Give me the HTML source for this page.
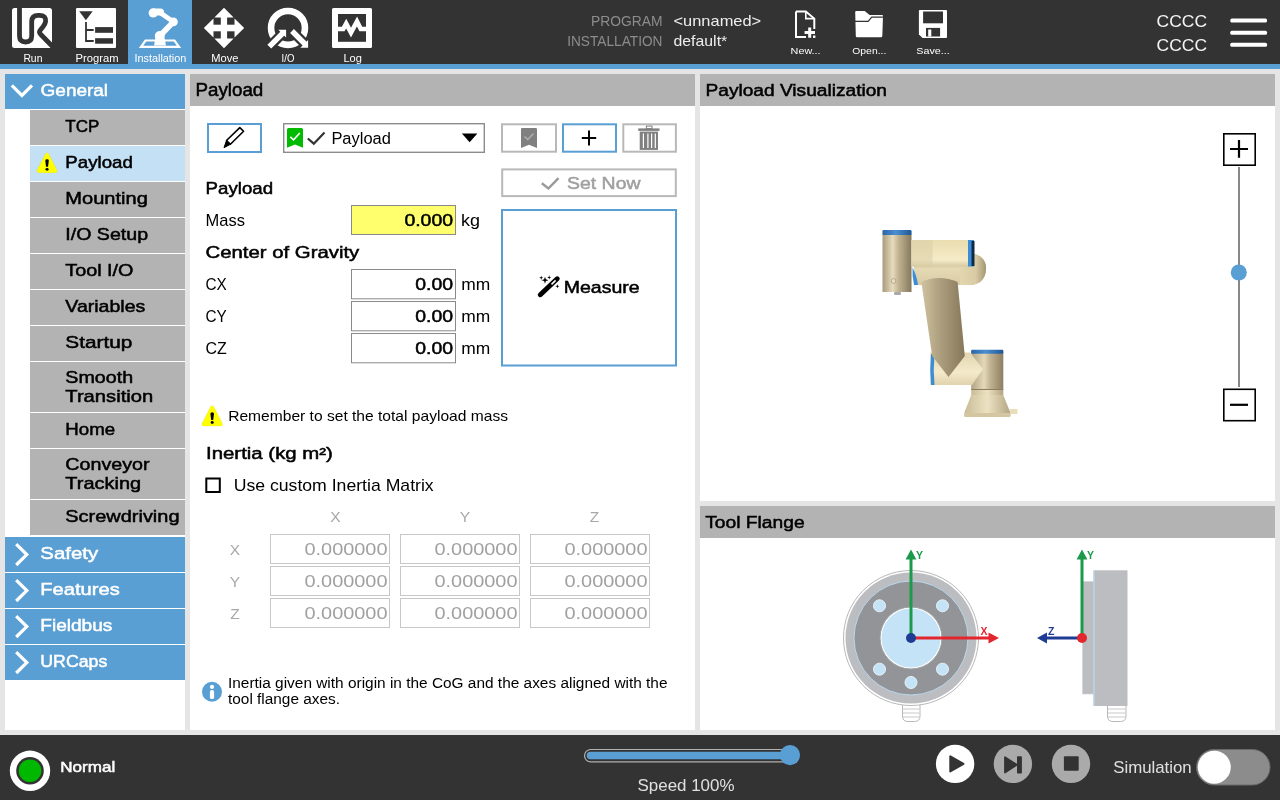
<!DOCTYPE html>
<html><head><meta charset="utf-8"><title>PolyScope - Installation - Payload</title>
<style>
html,body{margin:0;padding:0;width:1280px;height:800px;overflow:hidden;background:#e5e5e5;}
svg{display:block;font-family:"Liberation Sans", sans-serif;}
</style></head><body>
<div id="ui" style="position:absolute;left:0;top:0;width:1280px;height:800px;will-change:transform">
<svg width="1280" height="800" viewBox="0 0 1280 800">
<rect x="0" y="0" width="1280" height="800" fill="#e5e5e5"/>
<rect x="0" y="0" width="1280" height="64" fill="#333333"/>
<rect x="0" y="64" width="1280" height="5" fill="#5a9fd4"/>
<rect x="128" y="0" width="64" height="64" fill="#5a9fd4"/>
<rect x="0" y="735" width="1280" height="65" fill="#333333"/>
<rect x="5" y="74" width="180" height="656" fill="#fff"/>
<rect x="190" y="74" width="505" height="656" fill="#fff"/>
<rect x="700" y="74" width="575" height="427" fill="#fff"/>
<rect x="700" y="506" width="575" height="224" fill="#fff"/>
<rect x="190" y="74" width="505" height="32" fill="#b3b3b3"/>
<rect x="700" y="74" width="575" height="32" fill="#b3b3b3"/>
<rect x="700" y="506" width="575" height="32" fill="#b3b3b3"/>
<rect x="12" y="8" width="40" height="40" rx="2.5" fill="#ffffff"/>
<path d="M19.5 6 L19.5 36 Q19.5 42 25.6 42 Q31.7 42 31.7 36 L31.7 21.5 Q31.7 15.3 38 15.3 L39.5 15.3 Q46.3 15.3 45.6 21.5 Q45.2 24 43 26.8 L40.2 30.2 Q38.6 32.3 40.8 34.5 L54 48" fill="none" stroke="#333333" stroke-width="4.8"/>
<rect x="76" y="8" width="40" height="40" rx="1" fill="#ffffff"/>
<path d="M79.2 11.2 L92.7 11.2 L85.9 20.2 Z" fill="#333333"/>
<path d="M86 22 L86 41 L93.7 41 M86 30 L93.7 30" fill="none" stroke="#333333" stroke-width="1.8"/>
<rect x="95.1" y="27.1" width="17.9" height="5.7" fill="#333333"/>
<rect x="95.1" y="38.2" width="17.9" height="5.5" fill="#333333"/>
<path d="M145.5 40.5 L174.5 40.5 L179 46.8 L141 46.8 Z" fill="none" stroke="#ffffff" stroke-width="2.2" stroke-linejoin="miter"/>
<path d="M154 45.5 L155.5 38 L164.5 38 L166 45.5 Z" fill="#ffffff"/>
<circle cx="159.8" cy="36" r="5" fill="#ffffff"/>
<path d="M159.8 36 L173.4 21.9" fill="none" stroke="#ffffff" stroke-width="5.6"/>
<path d="M173.4 21.9 L161 13.2" fill="none" stroke="#ffffff" stroke-width="4.8"/>
<circle cx="173.4" cy="21.9" r="4.4" fill="#ffffff"/>
<path d="M153 8.5 L160.5 8.5 Q164 8.5 164 12 Q164 15.5 160.5 15.5 L153 15.5 Z" fill="#ffffff"/>
<circle cx="153.2" cy="12.9" r="4.6" fill="#ffffff"/>
<path d="M224 7.8 L233.6 17.5 L214.4 17.5 Z M224 48.2 L233.6 38.5 L214.4 38.5 Z M203.8 28 L213.5 18.4 L213.5 37.6 Z M244.2 28 L234.5 18.4 L234.5 37.6 Z" fill="#ffffff"/>
<rect x="220.8" y="17" width="6.3" height="22" fill="#ffffff"/><rect x="213" y="24.7" width="22" height="6.6" fill="#ffffff"/>
<circle cx="288" cy="27.9" r="16.95" fill="none" stroke="#ffffff" stroke-width="6.6"/>
<path d="M269.3 46.7 L283.5 32.5 M292 31 L306 45" stroke="#333333" stroke-width="10" fill="none"/>
<path d="M286.1 29.8 L286.1 37.6 L278.3 29.8 Z M308.1 47.8 L308.1 40 L300.3 47.8 Z" fill="#ffffff" stroke="#333333" stroke-width="2.2" stroke-linejoin="miter"/>
<path d="M286.1 29.8 L286.1 37.6 L278.3 29.8 Z M308.1 47.8 L308.1 40 L300.3 47.8 Z" fill="#ffffff"/>
<path d="M269.3 46.7 L283.5 32.5 M292 31 L305.5 44.5" stroke="#ffffff" stroke-width="5.4" fill="none"/>
<rect x="332" y="8" width="40" height="40" rx="1.5" fill="#ffffff"/>
<rect x="338" y="14" width="28" height="27.8" fill="#333333"/>
<path d="M337 29 L343.2 29 L346.2 23.6 L351 32.6 L357 21.5 L360.8 29 L367 29" fill="none" stroke="#ffffff" stroke-width="4.6" stroke-linejoin="miter" stroke-miterlimit="3"/>
<text x="23.4" y="62" font-size="10.4" fill="#ffffff" text-anchor="start" textLength="19" lengthAdjust="spacingAndGlyphs" >Run</text>
<text x="75.5" y="62" font-size="10.4" fill="#ffffff" text-anchor="start" textLength="43" lengthAdjust="spacingAndGlyphs" >Program</text>
<text x="134.4" y="62" font-size="10.4" fill="#ffffff" text-anchor="start" textLength="52" lengthAdjust="spacingAndGlyphs" >Installation</text>
<text x="211.2" y="62" font-size="10.4" fill="#ffffff" text-anchor="start" textLength="27.2" lengthAdjust="spacingAndGlyphs" >Move</text>
<text x="281.6" y="62" font-size="10.4" fill="#ffffff" text-anchor="start" textLength="12.8" lengthAdjust="spacingAndGlyphs" >I/O</text>
<text x="343.4" y="62" font-size="10.4" fill="#ffffff" text-anchor="start" textLength="18.5" lengthAdjust="spacingAndGlyphs" >Log</text>
<text x="662.5" y="26" font-size="14.3" fill="#8c8c8c" text-anchor="end" textLength="71.5" lengthAdjust="spacingAndGlyphs" >PROGRAM</text>
<text x="662.5" y="45.7" font-size="14.3" fill="#8c8c8c" text-anchor="end" textLength="95.3" lengthAdjust="spacingAndGlyphs" >INSTALLATION</text>
<text x="673.5" y="26" font-size="14.3" fill="#eeeeee" text-anchor="start" textLength="87.7" lengthAdjust="spacingAndGlyphs" >&lt;unnamed&gt;</text>
<text x="673.5" y="45.7" font-size="14.3" fill="#eeeeee" text-anchor="start" textLength="53.7" lengthAdjust="spacingAndGlyphs" >default*</text>
<path d="M796 11.4 L805.8 11.4 L814.3 18.6 L814.3 29" fill="none" stroke="#ffffff" stroke-width="2"/>
<path d="M796 11.4 L796 37 L806 37" fill="none" stroke="#ffffff" stroke-width="2"/>
<path d="M805.8 11.4 L805.8 18.6 L814.3 18.6" fill="none" stroke="#ffffff" stroke-width="1.6"/>
<path d="M809.7 27.5 L809.7 37.8 M804.6 32.6 L815 32.6" stroke="#ffffff" stroke-width="3" fill="none"/>
<rect x="813" y="35.5" width="2.4" height="2.4" fill="#ffffff"/>
<path d="M855.2 12 Q855.2 10.9 856.3 10.9 L864.7 10.9 L869.6 14.9 L882 14.9 Q883 14.9 883 16 L882.3 36 Q882.2 37.2 881 37.2 L857 37.2 Q855.9 37.2 855.8 36 Z" fill="#ffffff"/>
<path d="M854.5 21.4 L868.2 21.4 L871.7 17.2 L884 17.2" fill="none" stroke="#333333" stroke-width="1.2"/>
<path d="M919.9 10 L946 10 Q947 10 947 11 L947 37 Q947 37.9 946 37.9 L922.5 37.9 L918.9 34.3 L918.9 11 Q918.9 10 919.9 10 Z" fill="#ffffff"/>
<rect x="923.1" y="11.5" width="19.9" height="11.8" fill="#333333"/>
<rect x="926" y="27.9" width="14.1" height="8.6" fill="#333333"/>
<rect x="928.2" y="29.5" width="3.1" height="7" fill="#ffffff"/>
<text x="790.6" y="54.2" font-size="9.8" fill="#ffffff" text-anchor="start" textLength="30" lengthAdjust="spacingAndGlyphs" >New...</text>
<text x="852.3" y="54.2" font-size="9.8" fill="#ffffff" text-anchor="start" textLength="34" lengthAdjust="spacingAndGlyphs" >Open...</text>
<text x="916.3" y="54.2" font-size="9.8" fill="#ffffff" text-anchor="start" textLength="33.5" lengthAdjust="spacingAndGlyphs" >Save...</text>
<text x="1156.6" y="26.9" font-size="17" fill="#f5f5f5" text-anchor="start" textLength="50.5" lengthAdjust="spacingAndGlyphs" >CCCC</text>
<text x="1156.6" y="50.8" font-size="17" fill="#f5f5f5" text-anchor="start" textLength="50.5" lengthAdjust="spacingAndGlyphs" >CCCC</text>
<rect x="1230.3" y="18.4" width="36.7" height="4" rx="1.5" fill="#ffffff"/>
<rect x="1230.3" y="30.8" width="36.7" height="4" rx="1.5" fill="#ffffff"/>
<rect x="1230.3" y="42.8" width="36.7" height="4" rx="1.5" fill="#ffffff"/>
<rect x="5" y="74" width="180" height="35" fill="#5a9fd4"/>
<path d="M11.8 85.3 L21.9 95.4 L32 85.3" fill="none" stroke="#ffffff" stroke-width="3.2"/>
<text x="40.6" y="96.25" font-size="17.4" fill="#ffffff" stroke="#ffffff" stroke-width="0.5" text-anchor="start" textLength="67.5" lengthAdjust="spacingAndGlyphs" >General</text>
<rect x="30" y="110" width="155" height="35" fill="#b3b3b3"/>
<text x="65.3" y="131.75" font-size="17" fill="#000" stroke="#000" stroke-width="0.5" text-anchor="start" textLength="34" lengthAdjust="spacingAndGlyphs" >TCP</text>
<rect x="30" y="146" width="155" height="35" fill="#c4e0f5"/>
<text x="65.3" y="167.75" font-size="17" fill="#000" stroke="#000" stroke-width="0.5" text-anchor="start" textLength="67.5" lengthAdjust="spacingAndGlyphs" >Payload</text>
<rect x="30" y="182" width="155" height="35" fill="#b3b3b3"/>
<text x="65.3" y="203.75" font-size="17" fill="#000" stroke="#000" stroke-width="0.5" text-anchor="start" textLength="82.5" lengthAdjust="spacingAndGlyphs" >Mounting</text>
<rect x="30" y="218" width="155" height="35" fill="#b3b3b3"/>
<text x="65.3" y="239.75" font-size="17" fill="#000" stroke="#000" stroke-width="0.5" text-anchor="start" textLength="82.8" lengthAdjust="spacingAndGlyphs" >I/O Setup</text>
<rect x="30" y="254" width="155" height="35" fill="#b3b3b3"/>
<text x="65.3" y="275.75" font-size="17" fill="#000" stroke="#000" stroke-width="0.5" text-anchor="start" textLength="68.2" lengthAdjust="spacingAndGlyphs" >Tool I/O</text>
<rect x="30" y="290" width="155" height="35" fill="#b3b3b3"/>
<text x="65.3" y="311.75" font-size="17" fill="#000" stroke="#000" stroke-width="0.5" text-anchor="start" textLength="80" lengthAdjust="spacingAndGlyphs" >Variables</text>
<rect x="30" y="326" width="155" height="35" fill="#b3b3b3"/>
<text x="65.3" y="347.75" font-size="17" fill="#000" stroke="#000" stroke-width="0.5" text-anchor="start" textLength="67" lengthAdjust="spacingAndGlyphs" >Startup</text>
<rect x="30" y="362" width="155" height="50" fill="#b3b3b3"/>
<text x="65.3" y="383.4" font-size="17" fill="#000" stroke="#000" stroke-width="0.5" text-anchor="start" textLength="67.8" lengthAdjust="spacingAndGlyphs" >Smooth</text>
<text x="65.3" y="402.3" font-size="17" fill="#000" stroke="#000" stroke-width="0.5" text-anchor="start" textLength="88" lengthAdjust="spacingAndGlyphs" >Transition</text>
<rect x="30" y="413" width="155" height="35" fill="#b3b3b3"/>
<text x="65.3" y="434.75" font-size="17" fill="#000" stroke="#000" stroke-width="0.5" text-anchor="start" textLength="49.8" lengthAdjust="spacingAndGlyphs" >Home</text>
<rect x="30" y="449" width="155" height="50" fill="#b3b3b3"/>
<text x="65.3" y="470.4" font-size="17" fill="#000" stroke="#000" stroke-width="0.5" text-anchor="start" textLength="84.2" lengthAdjust="spacingAndGlyphs" >Conveyor</text>
<text x="65.3" y="489.3" font-size="17" fill="#000" stroke="#000" stroke-width="0.5" text-anchor="start" textLength="75.8" lengthAdjust="spacingAndGlyphs" >Tracking</text>
<rect x="30" y="500" width="155" height="35" fill="#b3b3b3"/>
<text x="65.3" y="521.75" font-size="17" fill="#000" stroke="#000" stroke-width="0.5" text-anchor="start" textLength="114.2" lengthAdjust="spacingAndGlyphs" >Screwdriving</text>
<path d="M47.050000000000004 154.576 L55.521 171.0255 L38.579 171.0255 Z" fill="#ffff00" stroke="#ffff00" stroke-width="2.955" stroke-linejoin="round"/>
<path d="M47.050000000000004 154.576 L55.521 171.0255 L38.579 171.0255 Z" fill="none" stroke="#d6cf00" stroke-width="4.1370000000000005" stroke-linejoin="round" opacity="0.35"/>
<path d="M47.050000000000004 154.576 L55.521 171.0255 L38.579 171.0255 Z" fill="#ffff00" stroke="#ffff00" stroke-width="2.955" stroke-linejoin="round"/>
<path d="M45.277 160.683 Q45.277 159.2055 47.050000000000004 159.2055 Q48.82300000000001 159.2055 48.82300000000001 160.683 L48.035000000000004 166.79 L46.065000000000005 166.79 Z" fill="#000"/>
<ellipse cx="47.050000000000004" cy="169.351" rx="1.52675" ry="1.42825" fill="#000"/>
<rect x="5" y="537" width="180" height="35" fill="#5a9fd4"/>
<path d="M16.2 544.2 L26.8 554.6 L16.2 565" fill="none" stroke="#ffffff" stroke-width="3.2"/>
<text x="40.3" y="559.1" font-size="17.2" fill="#ffffff" stroke="#ffffff" stroke-width="0.5" text-anchor="start" textLength="57.8" lengthAdjust="spacingAndGlyphs" >Safety</text>
<rect x="5" y="573" width="180" height="35" fill="#5a9fd4"/>
<path d="M16.2 580.2 L26.8 590.6 L16.2 601" fill="none" stroke="#ffffff" stroke-width="3.2"/>
<text x="40.3" y="595.1" font-size="17.2" fill="#ffffff" stroke="#ffffff" stroke-width="0.5" text-anchor="start" textLength="79.4" lengthAdjust="spacingAndGlyphs" >Features</text>
<rect x="5" y="609" width="180" height="35" fill="#5a9fd4"/>
<path d="M16.2 616.2 L26.8 626.6 L16.2 637" fill="none" stroke="#ffffff" stroke-width="3.2"/>
<text x="40.3" y="631.1" font-size="17.2" fill="#ffffff" stroke="#ffffff" stroke-width="0.5" text-anchor="start" textLength="72" lengthAdjust="spacingAndGlyphs" >Fieldbus</text>
<rect x="5" y="645" width="180" height="35" fill="#5a9fd4"/>
<path d="M16.2 652.2 L26.8 662.6 L16.2 673" fill="none" stroke="#ffffff" stroke-width="3.2"/>
<text x="40.3" y="667.1" font-size="17.2" fill="#ffffff" stroke="#ffffff" stroke-width="0.5" text-anchor="start" textLength="67" lengthAdjust="spacingAndGlyphs" >URCaps</text>
<text x="195.5" y="95.9" font-size="17.5" fill="#000" stroke="#000" stroke-width="0.5" text-anchor="start" textLength="67.8" lengthAdjust="spacingAndGlyphs" >Payload</text>
<rect x="208" y="124" width="53" height="28" fill="#fff" stroke="#5a9fd4" stroke-width="2"/>
<path d="M226.5 140.5 L239.8 127.6 L243.6 131.3 L230.4 144.3 Z" fill="#fff" stroke="#000" stroke-width="1.6" stroke-linejoin="round"/>
<path d="M226.5 140.5 L224 147.7 L230.4 144.3 Z" fill="#000" stroke="#000" stroke-width="1" stroke-linejoin="round"/>
<rect x="283.7" y="123.7" width="200.6" height="28.6" fill="#fff" stroke="#8c8c8c" stroke-width="1.4"/>
<path d="M287 129.5 Q287 127.9 288.6 127.9 L301.4 127.9 Q303 127.9 303 129.5 L303 147.8 L295 144.5 L287 147.8 Z" fill="#00bb00"/>
<path d="M290.3 136.9 L293.6 139.8 L299.8 133" fill="none" stroke="#fff" stroke-width="1.6"/>
<path d="M307.8 138.5 L313.8 143.7 L324.5 132.5" fill="none" stroke="#333" stroke-width="2.2"/>
<text x="331.4" y="143.8" font-size="17.3" fill="#000" text-anchor="start" textLength="59.5" lengthAdjust="spacingAndGlyphs" >Payload</text>
<path d="M461.9 133.5 L477.4 133.5 L469.6 142.2 Z" fill="#000"/>
<rect x="502" y="124.3" width="54" height="27.4" fill="#fff" stroke="#b8b8b8" stroke-width="2"/>
<path d="M521 129.2 Q521 128 522.2 128 L535.8 128 Q537 128 537 129.2 L537 148 L529 144.7 L521 148 Z" fill="#808080"/>
<path d="M524.5 136.5 L527.8 139.5 L533.5 133.5" fill="none" stroke="#b0b0b0" stroke-width="1.4"/>
<rect x="563" y="124.3" width="53" height="27.4" fill="#fff" stroke="#5a9fd4" stroke-width="2"/>
<path d="M589 130.6 L589 145.4 M581.8 138 L596.2 138" stroke="#000" stroke-width="2" fill="none"/>
<rect x="623.3" y="124.3" width="52.6" height="27.4" fill="#fff" stroke="#b8b8b8" stroke-width="2"/>
<rect x="638.2" y="128.4" width="21.3" height="2.5" fill="#808080"/><rect x="646.4" y="126.1" width="5.6" height="2.5" fill="none" stroke="#808080" stroke-width="1"/>
<rect x="639.7" y="131.6" width="18.3" height="18.3" fill="#808080"/>
<rect x="642.8" y="133.5" width="1.2" height="14.5" fill="#fff"/>
<rect x="647.3" y="133.5" width="1.2" height="14.5" fill="#fff"/>
<rect x="651.0" y="133.5" width="1.2" height="14.5" fill="#fff"/>
<rect x="654.6999999999999" y="133.5" width="1.2" height="14.5" fill="#fff"/>
<rect x="502.2" y="169.4" width="173.6" height="26.7" fill="#fff" stroke="#b8b8b8" stroke-width="2"/>
<path d="M541.8 183.3 L548.4 188.5 L558.5 178.1" fill="none" stroke="#999" stroke-width="2.4"/>
<text x="567" y="188.8" font-size="16.7" fill="#a0a0a0" stroke="#a0a0a0" stroke-width="0.5" text-anchor="start" textLength="73.5" lengthAdjust="spacingAndGlyphs" >Set Now</text>
<rect x="502" y="210" width="174" height="155.5" fill="#fff" stroke="#5a9fd4" stroke-width="2"/>
<path d="M540.3 294.7 L557.2 278.8" stroke="#000" stroke-width="5" stroke-linecap="round"/>
<path d="M551.5 284.3 L555.6 280.4" stroke="#fff" stroke-width="1.6"/>
<path d="M541.2 275.72 L541.72 277.28000000000003 L543.2800000000001 277.8 L541.72 278.32 L541.2 279.88 L540.6800000000001 278.32 L539.12 277.8 L540.6800000000001 277.28000000000003 Z" fill="#000"/>
<path d="M545 276.68 L545.88 279.32 L548.52 280.2 L545.88 281.08 L545 283.71999999999997 L544.12 281.08 L541.48 280.2 L544.12 279.32 Z" fill="#000"/>
<path d="M549.2 275.32 L549.72 276.88 L551.2800000000001 277.4 L549.72 277.91999999999996 L549.2 279.47999999999996 L548.6800000000001 277.91999999999996 L547.12 277.4 L548.6800000000001 276.88 Z" fill="#000"/>
<path d="M557.4 284.22 L557.92 285.78000000000003 L559.48 286.3 L557.92 286.82 L557.4 288.38 L556.88 286.82 L555.3199999999999 286.3 L556.88 285.78000000000003 Z" fill="#000"/>
<text x="563.7" y="292.8" font-size="17" fill="#000" stroke="#000" stroke-width="0.5" text-anchor="start" textLength="76" lengthAdjust="spacingAndGlyphs" >Measure</text>
<text x="205.6" y="194" font-size="17" fill="#000" stroke="#000" stroke-width="0.5" text-anchor="start" textLength="67.5" lengthAdjust="spacingAndGlyphs" >Payload</text>
<text x="205.6" y="226" font-size="17" fill="#000" text-anchor="start" textLength="39.4" lengthAdjust="spacingAndGlyphs" >Mass</text>
<rect x="351.5" y="205.5" width="104" height="29" fill="#ffff6e" stroke="#8a8a8a" stroke-width="1"/>
<text x="453" y="226" font-size="17" fill="#000" stroke="#000" stroke-width="0.5" text-anchor="end" textLength="48.6" lengthAdjust="spacingAndGlyphs" >0.000</text>
<text x="461.1" y="226" font-size="17" fill="#000" text-anchor="start" textLength="19" lengthAdjust="spacingAndGlyphs" >kg</text>
<text x="205.5" y="257.5" font-size="16.5" fill="#000" stroke="#000" stroke-width="0.5" text-anchor="start" textLength="153.8" lengthAdjust="spacingAndGlyphs" >Center of Gravity</text>
<text x="205.5" y="290" font-size="17" fill="#000" text-anchor="start" textLength="21.3" lengthAdjust="spacingAndGlyphs" >CX</text>
<rect x="351.5" y="269.5" width="104" height="29.3" fill="#fff" stroke="#8a8a8a" stroke-width="1"/>
<text x="453" y="290" font-size="17" fill="#000" stroke="#000" stroke-width="0.5" text-anchor="end" textLength="37.8" lengthAdjust="spacingAndGlyphs" >0.00</text>
<text x="461.2" y="290" font-size="17" fill="#000" text-anchor="start" textLength="29" lengthAdjust="spacingAndGlyphs" >mm</text>
<text x="205.5" y="322" font-size="17" fill="#000" text-anchor="start" textLength="21.3" lengthAdjust="spacingAndGlyphs" >CY</text>
<rect x="351.5" y="301.5" width="104" height="29.3" fill="#fff" stroke="#8a8a8a" stroke-width="1"/>
<text x="453" y="322" font-size="17" fill="#000" stroke="#000" stroke-width="0.5" text-anchor="end" textLength="37.8" lengthAdjust="spacingAndGlyphs" >0.00</text>
<text x="461.2" y="322" font-size="17" fill="#000" text-anchor="start" textLength="29" lengthAdjust="spacingAndGlyphs" >mm</text>
<text x="205.5" y="353.8" font-size="17" fill="#000" text-anchor="start" textLength="21.3" lengthAdjust="spacingAndGlyphs" >CZ</text>
<rect x="351.5" y="333.5" width="104" height="29.3" fill="#fff" stroke="#8a8a8a" stroke-width="1"/>
<text x="453" y="353.8" font-size="17" fill="#000" stroke="#000" stroke-width="0.5" text-anchor="end" textLength="37.8" lengthAdjust="spacingAndGlyphs" >0.00</text>
<text x="461.2" y="353.8" font-size="17" fill="#000" text-anchor="start" textLength="29" lengthAdjust="spacingAndGlyphs" >mm</text>
<path d="M212.2 407.5 L220.79999999999998 424.2 L203.6 424.2 Z" fill="#ffff00" stroke="#ffff00" stroke-width="3.0" stroke-linejoin="round"/>
<path d="M212.2 407.5 L220.79999999999998 424.2 L203.6 424.2 Z" fill="none" stroke="#d6cf00" stroke-width="4.2" stroke-linejoin="round" opacity="0.35"/>
<path d="M212.2 407.5 L220.79999999999998 424.2 L203.6 424.2 Z" fill="#ffff00" stroke="#ffff00" stroke-width="3.0" stroke-linejoin="round"/>
<path d="M210.39999999999998 413.7 Q210.39999999999998 412.2 212.2 412.2 Q214.0 412.2 214.0 413.7 L213.2 419.9 L211.2 419.9 Z" fill="#000"/>
<ellipse cx="212.2" cy="422.5" rx="1.55" ry="1.45" fill="#000"/>
<text x="228.2" y="420.8" font-size="14.5" fill="#000" text-anchor="start" textLength="279.8" lengthAdjust="spacingAndGlyphs" >Remember to set the total payload mass</text>
<text x="206" y="458.8" font-size="16.3" fill="#000" stroke="#000" stroke-width="0.5" text-anchor="start" textLength="126.9" lengthAdjust="spacingAndGlyphs" >Inertia (kg m²)</text>
<rect x="206.3" y="478.5" width="13.5" height="13.5" fill="#fff" stroke="#000" stroke-width="2"/>
<text x="233.7" y="491" font-size="17" fill="#000" text-anchor="start" textLength="200" lengthAdjust="spacingAndGlyphs" >Use custom Inertia Matrix</text>
<text x="335.4" y="522" font-size="15.5" fill="#a8a8a8" text-anchor="middle" >X</text>
<text x="464.9" y="522" font-size="15.5" fill="#a8a8a8" text-anchor="middle" >Y</text>
<text x="594.4" y="522" font-size="15.5" fill="#a8a8a8" text-anchor="middle" >Z</text>
<text x="235" y="554.5" font-size="15.5" fill="#a8a8a8" text-anchor="middle" >X</text>
<rect x="270.5" y="534.5" width="119" height="29" fill="#fff" stroke="#c8c8c8" stroke-width="1"/>
<text x="387.5" y="554.7" font-size="16" fill="#a0a0a0" text-anchor="end" textLength="83" lengthAdjust="spacingAndGlyphs" >0.000000</text>
<rect x="400.5" y="534.5" width="119" height="29" fill="#fff" stroke="#c8c8c8" stroke-width="1"/>
<text x="517.5" y="554.7" font-size="16" fill="#a0a0a0" text-anchor="end" textLength="83" lengthAdjust="spacingAndGlyphs" >0.000000</text>
<rect x="530.5" y="534.5" width="119" height="29" fill="#fff" stroke="#c8c8c8" stroke-width="1"/>
<text x="647.5" y="554.7" font-size="16" fill="#a0a0a0" text-anchor="end" textLength="83" lengthAdjust="spacingAndGlyphs" >0.000000</text>
<text x="235" y="586.5" font-size="15.5" fill="#a8a8a8" text-anchor="middle" >Y</text>
<rect x="270.5" y="566.5" width="119" height="29" fill="#fff" stroke="#c8c8c8" stroke-width="1"/>
<text x="387.5" y="586.7" font-size="16" fill="#a0a0a0" text-anchor="end" textLength="83" lengthAdjust="spacingAndGlyphs" >0.000000</text>
<rect x="400.5" y="566.5" width="119" height="29" fill="#fff" stroke="#c8c8c8" stroke-width="1"/>
<text x="517.5" y="586.7" font-size="16" fill="#a0a0a0" text-anchor="end" textLength="83" lengthAdjust="spacingAndGlyphs" >0.000000</text>
<rect x="530.5" y="566.5" width="119" height="29" fill="#fff" stroke="#c8c8c8" stroke-width="1"/>
<text x="647.5" y="586.7" font-size="16" fill="#a0a0a0" text-anchor="end" textLength="83" lengthAdjust="spacingAndGlyphs" >0.000000</text>
<text x="235" y="618.5" font-size="15.5" fill="#a8a8a8" text-anchor="middle" >Z</text>
<rect x="270.5" y="598.5" width="119" height="29" fill="#fff" stroke="#c8c8c8" stroke-width="1"/>
<text x="387.5" y="618.7" font-size="16" fill="#a0a0a0" text-anchor="end" textLength="83" lengthAdjust="spacingAndGlyphs" >0.000000</text>
<rect x="400.5" y="598.5" width="119" height="29" fill="#fff" stroke="#c8c8c8" stroke-width="1"/>
<text x="517.5" y="618.7" font-size="16" fill="#a0a0a0" text-anchor="end" textLength="83" lengthAdjust="spacingAndGlyphs" >0.000000</text>
<rect x="530.5" y="598.5" width="119" height="29" fill="#fff" stroke="#c8c8c8" stroke-width="1"/>
<text x="647.5" y="618.7" font-size="16" fill="#a0a0a0" text-anchor="end" textLength="83" lengthAdjust="spacingAndGlyphs" >0.000000</text>
<circle cx="212" cy="691.8" r="10" fill="#5a9fd4"/>
<rect x="209.9" y="690" width="4.2" height="9.1" rx="1.9" fill="#fff"/><circle cx="212" cy="686.9" r="2.1" fill="#fff"/>
<text x="228" y="687.9" font-size="15.5" fill="#000" text-anchor="start" textLength="439.5" lengthAdjust="spacingAndGlyphs" >Inertia given with origin in the CoG and the axes aligned with the</text>
<text x="228" y="704.3" font-size="15.5" fill="#000" text-anchor="start" textLength="112" lengthAdjust="spacingAndGlyphs" >tool flange axes.</text>
<text x="705.5" y="96" font-size="17.1" fill="#000" stroke="#000" stroke-width="0.5" text-anchor="start" textLength="181.5" lengthAdjust="spacingAndGlyphs" >Payload Visualization</text>
<text x="705.2" y="527.9" font-size="17.3" fill="#000" stroke="#000" stroke-width="0.5" text-anchor="start" textLength="99.5" lengthAdjust="spacingAndGlyphs" >Tool Flange</text>
<rect x="1223.8" y="133.8" width="31.4" height="31.4" fill="#fff" stroke="#000" stroke-width="1.6"/>
<path d="M1239 140 L1239 157.8 M1230 149 L1248 149" stroke="#000" stroke-width="2.2"/>
<line x1="1239" y1="167" x2="1239" y2="387" stroke="#888" stroke-width="2"/>
<circle cx="1238.8" cy="272.5" r="8" fill="#5a9fd4"/>
<rect x="1223.8" y="389.3" width="31.4" height="31.4" fill="#fff" stroke="#000" stroke-width="1.6"/>
<path d="M1230 404.8 L1248 404.8" stroke="#000" stroke-width="2.2"/>
<defs>
<linearGradient id="gv" x1="0" x2="1" y1="0" y2="0">
<stop offset="0" stop-color="#a89b7c"/><stop offset="0.35" stop-color="#e6dbbd"/><stop offset="0.55" stop-color="#c2b493"/><stop offset="1" stop-color="#85785c"/>
</linearGradient>
<linearGradient id="gb" x1="0" x2="1" y1="0" y2="0">
<stop offset="0" stop-color="#b0a383"/><stop offset="0.4" stop-color="#e3d8b8"/><stop offset="0.6" stop-color="#c0b291"/><stop offset="1" stop-color="#8c7e61"/>
</linearGradient>
<linearGradient id="gh" x1="0" x2="0" y1="0" y2="1">
<stop offset="0" stop-color="#e9ddb0"/><stop offset="0.5" stop-color="#f1e6bf"/><stop offset="0.75" stop-color="#f6ecc8"/><stop offset="1" stop-color="#d6c9a2"/>
</linearGradient>
<linearGradient id="ge" x1="0" x2="0" y1="0" y2="1">
<stop offset="0" stop-color="#c9bc98"/><stop offset="0.5" stop-color="#e5d9b3"/><stop offset="1" stop-color="#d8cba6"/>
</linearGradient>
<linearGradient id="gd" x1="0" x2="1" y1="0" y2="0">
<stop offset="0" stop-color="#cfc3a0"/><stop offset="0.45" stop-color="#ab9d7d"/><stop offset="1" stop-color="#857759"/>
</linearGradient>
<linearGradient id="gs" x1="0" x2="0" y1="0" y2="1">
<stop offset="0" stop-color="#e2d6b0"/><stop offset="0.6" stop-color="#f4eacb"/><stop offset="1" stop-color="#e0d3ad"/>
</linearGradient>
<linearGradient id="gc" x1="0" x2="1" y1="0" y2="0">
<stop offset="0" stop-color="#c8bb96"/><stop offset="0.5" stop-color="#ece2c2"/><stop offset="1" stop-color="#b3a582"/>
</linearGradient>
</defs>
<!-- elbow capsule -->
<linearGradient id="gr" x1="0" x2="1" y1="0" y2="0"><stop offset="0" stop-color="#e3d7b0"/><stop offset="0.6" stop-color="#d8cba5"/><stop offset="1" stop-color="#a39673"/></linearGradient>
<path d="M913 262 L975 254 Q987 258 986 270 Q985 283 972 285 L916 285 Z" fill="url(#ge)"/>
<path d="M960 254 L975 254 Q987 258 986 270 Q985 283 972 285 L960 285 Z" fill="url(#gr)"/>
<path d="M912.5 267.5 Q917 276 918 285 L914 285 Q912 276 912.5 267.5 Z" fill="#3b8ed6"/>
<!-- base -->
<rect x="971.2" y="351.5" width="32.1" height="37.5" fill="url(#gb)"/>
<rect x="971.2" y="349.8" width="32.1" height="4" rx="1" fill="url(#gcap)"/>
<rect x="971.2" y="389" width="32.1" height="6" fill="url(#gc)"/>
<line x1="971.2" y1="389.5" x2="1003.3" y2="389.5" stroke="#8c7e61" stroke-width="1"/>
<path d="M971.2 395 L1003.3 395 L1010.7 413.5 L964 413.5 Z" fill="url(#gc)"/>
<rect x="964" y="413" width="46.7" height="4" rx="1.5" fill="#d3c6a1"/>
<rect x="1010" y="409" width="7.4" height="5" fill="#e8ddb8"/>
<!-- shoulder -->
<path d="M930.4 352.5 L970 352.5 L983 369 L972 385 L930.4 385 Z" fill="url(#gs)"/>
<path d="M931 354 Q929.5 370 931 385 L934.5 385 Q933 370 934.5 354 Z" fill="#3b8ed6"/>
<!-- diagonal forearm -->
<path d="M921.3 282 Q939 274 957.6 282 L964.8 356 L948.5 377 L932.2 356 Z" fill="url(#gd)"/>
<!-- wrist vertical -->
<rect x="882.5" y="233" width="29" height="59" fill="url(#gv)"/>
<linearGradient id="gcap" x1="0" x2="1" y1="0" y2="0"><stop offset="0" stop-color="#2a64a8"/><stop offset="0.45" stop-color="#4a8fd0"/><stop offset="1" stop-color="#1f5796"/></linearGradient>
<rect x="882.5" y="230" width="29" height="5" rx="1.2" fill="url(#gcap)"/>
<rect x="894" y="292" width="7" height="3" rx="1.2" fill="#a9a9a9"/>
<circle cx="893.5" cy="281" r="2.4" fill="#e7dcc0" stroke="#9a8d70" stroke-width="0.6"/>
<!-- horizontal forearm cylinder -->
<rect x="911.5" y="240" width="58" height="26.5" fill="url(#gh)"/>
<rect x="911.5" y="240" width="21" height="26.5" fill="#d9cda5" opacity="0.55"/>
<path d="M968 240 L974 240 L974 266.5 L968 266.5 Z" fill="#3b8ed6"/>
<rect x="971.5" y="241" width="3" height="25" fill="#0e2a44"/>

<!-- front view flange -->
<path d="M902.5 704 L902.5 716 Q902.5 721.5 908 721.5 L914.5 721.5 Q920 721.5 920 716 L920 704" fill="#fff" stroke="#b8b8b8" stroke-width="1"/>
<line x1="903" y1="709" x2="919.5" y2="709" stroke="#c8c8c8" stroke-width="1"/>
<line x1="903" y1="713" x2="919.5" y2="713" stroke="#c8c8c8" stroke-width="1"/>
<line x1="903" y1="717" x2="919.5" y2="717" stroke="#c8c8c8" stroke-width="1"/>
<circle cx="911" cy="638" r="67.5" fill="#fff" stroke="#b8b8b8" stroke-width="1"/>
<circle cx="911" cy="638" r="65.5" fill="#bcbdc0"/>
<circle cx="911" cy="638" r="57" fill="#939497" stroke="#b9d9f0" stroke-width="1"/>
<circle cx="911" cy="638" r="31" fill="#fff" stroke="#a0a0a0" stroke-width="1"/>
<circle cx="911" cy="638" r="29.5" fill="#c5e3f6"/>
<circle cx="879.5" cy="605.8" r="6" fill="#c5e3f6" stroke="#e8f3fb" stroke-width="1"/>
<circle cx="942.5" cy="605.8" r="6" fill="#c5e3f6" stroke="#e8f3fb" stroke-width="1"/>
<circle cx="879.5" cy="669.2" r="6" fill="#c5e3f6" stroke="#e8f3fb" stroke-width="1"/>
<circle cx="942.5" cy="669.2" r="6" fill="#c5e3f6" stroke="#e8f3fb" stroke-width="1"/>
<circle cx="911" cy="682.5" r="6" fill="#c5e3f6" stroke="#e8f3fb" stroke-width="1"/>
<line x1="911" y1="638" x2="911" y2="557" stroke="#1a9a4a" stroke-width="3"/>
<path d="M905.6 559.5 L916.4 559.5 L911 549.5 Z" fill="#1a9a4a"/>
<line x1="911" y1="638" x2="990" y2="638" stroke="#e3262e" stroke-width="3"/>
<path d="M988.5 632.5 L988.5 643.5 L999 638 Z" fill="#e3262e"/>
<circle cx="911" cy="638" r="5" fill="#1f3c94"/>
<text x="916" y="558.5" font-size="10.5" font-weight="bold" fill="#1a9a4a">Y</text>
<text x="980.5" y="634.8" font-size="10.5" font-weight="bold" fill="#e3262e">X</text>
<!-- side view -->
<path d="M1107.5 704 L1107.5 716 Q1107.5 721.5 1113 721.5 L1120.5 721.5 Q1126 721.5 1126 716 L1126 704" fill="#fff" stroke="#b8b8b8" stroke-width="1"/>
<line x1="1108" y1="709" x2="1125.5" y2="709" stroke="#c8c8c8" stroke-width="1"/>
<line x1="1108" y1="713" x2="1125.5" y2="713" stroke="#c8c8c8" stroke-width="1"/>
<line x1="1108" y1="717" x2="1125.5" y2="717" stroke="#c8c8c8" stroke-width="1"/>
<rect x="1082.5" y="581.5" width="11.5" height="112.5" fill="#bcbdc0" stroke="#d0d0d0" stroke-width="0.6"/>
<rect x="1093.5" y="570.3" width="34" height="135.7" fill="#bcbdc0"/>
<line x1="1094" y1="570.5" x2="1094" y2="706" stroke="#b9d9f0" stroke-width="1.2"/>
<line x1="1082" y1="638" x2="1082" y2="557" stroke="#1a9a4a" stroke-width="3"/>
<path d="M1076.6 559.5 L1087.4 559.5 L1082 549.5 Z" fill="#1a9a4a"/>
<line x1="1082" y1="638" x2="1045" y2="638" stroke="#1f3c94" stroke-width="3"/>
<path d="M1047 632.5 L1047 643.5 L1037 638 Z" fill="#1f3c94"/>
<circle cx="1082" cy="638" r="5" fill="#e3262e"/>
<text x="1087" y="558.5" font-size="10.5" font-weight="bold" fill="#1a9a4a">Y</text>
<text x="1048" y="634.8" font-size="10.5" font-weight="bold" fill="#1f3c94">Z</text>

<circle cx="30" cy="770.8" r="20.2" fill="#fff"/>
<circle cx="30" cy="770.8" r="13.8" fill="#333333"/>
<circle cx="30" cy="770.8" r="11.3" fill="#00b800"/>
<text x="60.3" y="772.2" font-size="15" fill="#fff" stroke="#fff" stroke-width="0.5" text-anchor="start" textLength="55" lengthAdjust="spacingAndGlyphs" >Normal</text>
<rect x="584.5" y="749.5" width="207" height="12.4" rx="6.2" fill="none" stroke="#b0b0b0" stroke-width="1.2"/>
<rect x="586.7" y="751.7" width="204" height="7.6" rx="3.8" fill="#5a9fd4"/>
<circle cx="790" cy="755.1" r="10.1" fill="#5a9fd4"/>
<text x="637.5" y="790.9" font-size="17" fill="#e0e0e0" text-anchor="start" textLength="97" lengthAdjust="spacingAndGlyphs" >Speed 100%</text>
<circle cx="955.1" cy="763.9" r="19.2" fill="#fff"/>
<path d="M950.3 756.3 L950.3 771.5 L963.5 763.9 Z" fill="#333333" stroke="#333333" stroke-width="2" stroke-linejoin="round"/>
<circle cx="1012.9" cy="763.9" r="19.2" fill="#aaaaaa"/>
<path d="M1005 757.2 L1005 772.5 L1016.8 764.8 Z" fill="#333333" stroke="#333333" stroke-width="1.8" stroke-linejoin="round"/>
<rect x="1017" y="756.2" width="4.9" height="17.3" rx="0.8" fill="#333333"/>
<circle cx="1071" cy="763.9" r="19.2" fill="#aaaaaa"/>
<rect x="1063.9" y="756.2" width="14.8" height="14.6" rx="1" fill="#333333"/>
<text x="1113.2" y="773" font-size="17" fill="#e0e0e0" text-anchor="start" textLength="78.5" lengthAdjust="spacingAndGlyphs" >Simulation</text>
<rect x="1196.5" y="749.5" width="73.5" height="35.5" rx="17.75" fill="#8c8c8c" stroke="#6a6a6a" stroke-width="1"/>
<circle cx="1214.3" cy="767.2" r="16.5" fill="#fff"/>
</svg>
</div>
</body></html>
